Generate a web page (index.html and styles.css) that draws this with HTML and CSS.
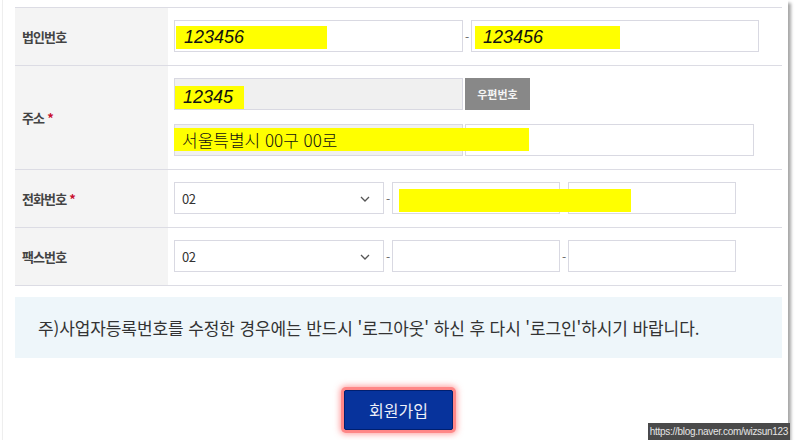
FILE: index.html
```html
<!DOCTYPE html>
<html lang="ko">
<head>
    <meta charset="UTF-8">
    <meta name="viewport" content="width=device-width, initial-scale=1.0">
    <title>회원가입</title>
    <link rel="stylesheet" href="styles.css">
</head>

<body>
    <div class="frame">
        <div class="form-table">
            <div class="row">
                <div class="label">법인번호</div>
                <div class="field">
                    <div class="line">
                        <div class="input w-half"><span class="mark mark-a">123456</span></div>
                        <span class="dash">-</span>
                        <div class="input w-half2"><span class="mark mark-b">123456</span></div>
                    </div>
                </div>
            </div>

            <div class="row">
                <div class="label">주소 <span class="req">*</span></div>
                <div class="field">
                    <div class="line">
                        <div class="input w-half readonly"><span class="mark mark-zip">12345</span></div>
                        <button class="zip-btn">우편번호</button>
                    </div>
                    <div class="line addr-line">
                        <div class="input w-half readonly"></div>
                        <div class="input w-addr"></div>
                        <span class="mark mark-addr">서울특별시 00구 00로</span>
                    </div>
                </div>
            </div>

            <div class="row">
                <div class="label">전화번호 <span class="req">*</span></div>
                <div class="field">
                    <div class="line phone-line">
                        <div class="select">02
                            <svg class="chevron" width="10" height="6" viewBox="0 0 10 6"><path d="M1 1 L5 5 L9 1" fill="none" stroke="#555" stroke-width="1.3"/></svg>
                        </div>
                        <span class="dash">-</span>
                        <div class="input w-tel"></div>
                        <span class="dash dash-blank"></span>
                        <div class="input w-tel"></div>
                        <span class="mark mark-tel"></span>
                    </div>
                </div>
            </div>

            <div class="row">
                <div class="label">팩스번호</div>
                <div class="field">
                    <div class="line">
                        <div class="select">02
                            <svg class="chevron" width="10" height="6" viewBox="0 0 10 6"><path d="M1 1 L5 5 L9 1" fill="none" stroke="#555" stroke-width="1.3"/></svg>
                        </div>
                        <span class="dash">-</span>
                        <div class="input w-tel"></div>
                        <span class="dash">-</span>
                        <div class="input w-tel"></div>
                    </div>
                </div>
            </div>
        </div>

        <div class="notice">주)사업자등록번호를 수정한 경우에는 반드시 '로그아웃' 하신 후 다시 '로그인'하시기 바랍니다.</div>

        <div class="actions">
            <button class="join-btn">회원가입</button>
        </div>
    </div>

    <div class="watermark">https://blog.naver.com/wizsun123</div>
</body>
</html>
```

FILE: styles.css
```css
body {
    margin: 0;
    font-family: "Noto Sans CJK KR", "Noto Sans", sans-serif;
    background-color: white;
    color: #333;
}
.frame {
    position: relative;
    margin-left: 2px;
    width: 773px;
    height: 433px;
    padding: 7px 0 0 12px;
    background-color: white;
    border-left: 1px solid #eee;
    box-shadow: 3px 3px 3px rgba(0, 0, 0, 0.35);
}
.form-table {
    width: 767px;
    border-top: 1px solid #dcdce4;
}
.row {
    display: flex;
    border-bottom: 1px solid #dcdce4;
}
.label {
    width: 146px;
    padding-left: 7px;
    background-color: #f4f4f4;
    display: flex;
    align-items: center;
    font-size: 13px;
    font-weight: bold;
    letter-spacing: -0.9px;
    color: #444;
}
.req {
    color: #c8102e;
    margin-left: 3px;
}
.field {
    flex: 1;
    padding: 12px 0 13px 6px;
    display: flex;
    flex-direction: column;
    gap: 14px;
}
.line {
    position: relative;
    display: flex;
    align-items: center;
    height: 32px;
}
.input {
    box-sizing: border-box;
    height: 32px;
    border: 1px solid #d9d9e2;
    background-color: white;
    position: relative;
}
.readonly {
    background-color: #f0f0f0;
}
.w-half {
    width: 289px;
}
.w-half2 {
    width: 288px;
}
.w-addr {
    width: 289px;
    margin-left: 2px;
}
.w-tel {
    width: 168px;
}
.dash {
    width: 8px;
    text-align: center;
    font-size: 12px;
    color: #666;
}
.dash-blank {
    color: transparent;
}
.select {
    box-sizing: border-box;
    width: 210px;
    height: 32px;
    border: 1px solid #d9d9e2;
    display: flex;
    align-items: center;
    padding-left: 7px;
    font-size: 13px;
    letter-spacing: -0.5px;
    color: #333;
    position: relative;
}
.chevron {
    position: absolute;
    right: 13px;
    top: 13px;
}
.zip-btn {
    width: 65px;
    height: 32px;
    margin-left: 2px;
    border: none;
    background-color: #888;
    color: #f4f4f4;
    font-family: inherit;
    font-size: 11px;
    font-weight: bold;
    padding: 0;
}
.mark {
    position: absolute;
    background-color: #ffff00;
    font-family: "Liberation Sans", sans-serif;
    font-style: italic;
    font-weight: normal;
    font-size: 18px;
    color: #111;
    line-height: 23px;
    height: 23px;
    padding-left: 8px;
    box-sizing: border-box;
}
.mark-a {
    left: 1px;
    top: 5px;
    width: 151px;
}
.mark-b {
    left: 3px;
    top: 5px;
    width: 145px;
}
.mark-zip {
    left: 0;
    top: 7px;
    width: 69px;
}
.mark-addr {
    left: 0;
    top: 4px;
    width: 355px;
    font-family: "Noto Sans CJK KR", sans-serif;
    font-size: 17px;
    font-style: normal;
    font-weight: 300;
}
.mark-tel {
    left: 225px;
    top: 7px;
    width: 232px;
}
.notice {
    width: 744px;
    margin-top: 11px;
    height: 61px;
    padding-left: 23px;
    display: flex;
    align-items: center;
    background-color: #eef6fa;
    font-size: 17px;
    letter-spacing: -0.1px;
    color: #333;
}
.actions {
    width: 767px;
    display: flex;
    justify-content: center;
    margin-top: 32px;
}
.join-btn {
    width: 109px;
    height: 40px;
    border: 1px solid #001f70;
    background-color: #07339c;
    color: #eef0f8;
    font-family: inherit;
    font-size: 16px;
    box-shadow: 0 0 0 3px rgba(255, 130, 130, 0.9), 0 0 6px 4px rgba(255, 90, 90, 0.6);
    border-radius: 2px;
}
.watermark {
    position: absolute;
    left: 648px;
    top: 423px;
    width: 142px;
    height: 17px;
    background-color: #4a4a4a;
    color: #e6e6e6;
    font-family: "Liberation Sans", sans-serif;
    font-size: 10px;
    letter-spacing: -0.3px;
    line-height: 17px;
    text-align: center;
    white-space: nowrap;
}
```
